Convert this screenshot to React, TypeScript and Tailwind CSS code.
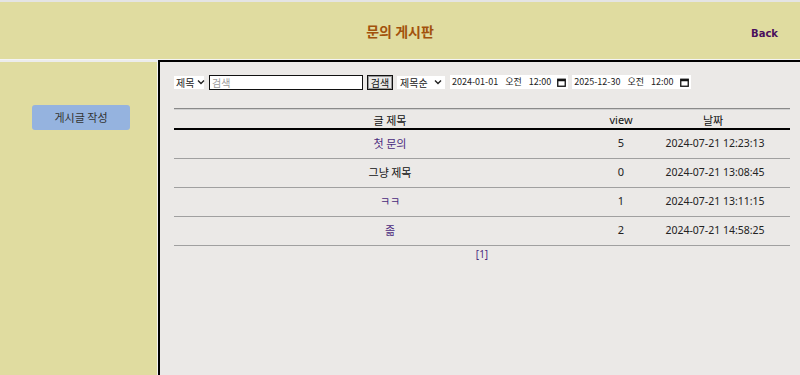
import React from "react";

const KR = { fontFamily: '"Noto Sans CJK KR", "Noto Sans", sans-serif' };
const SANS = { fontFamily: '"Noto Sans", "Noto Sans CJK KR", sans-serif' };

function Chevron() {
  return (
    <svg width="8" height="6" viewBox="0 0 8 6" className="ml-[3px] shrink-0">
      <path d="M1 1.5 L4 4.5 L7 1.5" stroke="#222" strokeWidth="1.4" fill="none" />
    </svg>
  );
}

function Cal() {
  return (
    <svg width="9" height="9" viewBox="0 0 9 9" className="ml-[6px] shrink-0">
      <rect x="0.75" y="1.25" width="7.5" height="7" fill="none" stroke="#111" strokeWidth="1.3" />
      <rect x="0.75" y="1.25" width="7.5" height="2" fill="#111" />
    </svg>
  );
}

function DateBox({ d, t }: { d: string; t: string }) {
  return (
    <div className="flex items-center bg-white h-[14px] px-[2px] text-[9px] text-[#222] whitespace-nowrap" style={KR}>
      <span>{d}</span>
      <span className="ml-[7px]">오전</span>
      <span className="ml-[7px]">{t}</span>
      <Cal />
    </div>
  );
}

const rows = [
  { t: "첫 문의", link: true, v: "5", d: "2024-07-21 12:23:13" },
  { t: "그냥 제목", link: false, v: "0", d: "2024-07-21 13:08:45" },
  { t: "ㅋㅋ", link: true, v: "1", d: "2024-07-21 13:11:15" },
  { t: "졺", link: true, v: "2", d: "2024-07-21 14:58:25" },
];

export default function App() {
  return (
    <div className="w-[800px] h-[375px] overflow-hidden bg-[#e4e4e4] pt-[2px] flex flex-col" style={KR}>
      <header className="h-[57px] bg-[#e0dca0] grid grid-cols-[1fr_auto_1fr] items-center shrink-0">
        <div />
        <div className="text-[14px] font-bold text-[#a2520c] pt-[1px]">문의 게시판</div>
        <div className="justify-self-end pr-[22px] pt-[6px] text-[10px] font-bold text-[#4a0f5c]" style={{ fontFamily: '"DejaVu Sans", sans-serif' }}>
          Back
        </div>
      </header>
      <div className="h-[1px] bg-[#f4f4f4] shrink-0" />
      <div className="flex flex-1 min-h-0">
        <aside className="w-[158px] shrink-0 bg-[#e0dca0] border-t-[2px] border-t-[#ececec] border-r border-r-[#f4f4f4] pt-[43px] pl-[32px]">
          <div className="w-[98px] h-[25px] rounded-[3px] bg-[#95b3df] flex items-center justify-center text-[11px] text-[#333]">
            게시글 작성
          </div>
        </aside>
        <main className="flex-1 bg-[#ebe9e7] border-t-[2px] border-l-[2px] border-black pl-[14px] pr-[10px] pt-[13px]">
          <div className="flex items-center h-[14px] text-[10px] text-[#222] whitespace-nowrap">
            <div className="flex items-center bg-white h-[13px] px-[2px] w-[30px] shrink-0">
              <span>제목</span>
              <Chevron />
            </div>
            <div className="ml-[5px] w-[154px] h-[15px] border-[1.5px] border-[#111] bg-white flex items-center px-[2px] text-[10px] text-[#9a9a9a] shrink-0">
              검색
            </div>
            <div className="ml-[4px] w-[26px] h-[15px] border border-[#111] bg-[#e9e9e9] flex items-center justify-center text-[10px] text-[#111] shadow-[inset_0_0_0_1px_#999] shrink-0">
              검색
            </div>
            <div className="ml-[4px] flex items-center bg-white h-[13px] px-[3px] w-[48px] justify-between shrink-0">
              <span>제목순</span>
              <Chevron />
            </div>
            <div className="ml-[5px] shrink-0">
              <DateBox d="2024-01-01" t="12:00" />
            </div>
            <div className="ml-[4px] shrink-0">
              <DateBox d="2025-12-30" t="12:00" />
            </div>
          </div>

          <div className="mt-[19px] h-[2px] border-t border-t-[#8a8a8a] border-b border-b-[#cfcfcf]" />

          <div className="grid grid-cols-[432px_30px_154px] text-[11px]">
            <div className="h-[18px] flex items-center justify-center text-[#111] pt-[3px]">글 제목</div>
            <div className="h-[18px] flex items-center justify-center text-[#111] pt-[3px]" style={SANS}>view</div>
            <div className="h-[18px] flex items-center justify-center text-[#111] pt-[3px]">날짜</div>
            <div className="col-span-3 h-[2px] bg-black" />
            {rows.map((r, i) => (
              <React.Fragment key={i}>
                <div className={`h-[28px] flex items-center justify-center pb-[1px] ${r.link ? "text-[#4b2c7e]" : "text-[#111]"}`}>{r.t}</div>
                <div className="h-[28px] flex items-center justify-center pb-[1px] text-[#222]" style={SANS}>{r.v}</div>
                <div className="h-[28px] flex items-center justify-center pb-[1px] text-[#222] text-[10.5px] pl-[4px]" style={SANS}>{r.d}</div>
                <div className="col-span-3 h-[1px] bg-[#a0a0a0]" />
              </React.Fragment>
            ))}
          </div>
          <div className="mt-[1px] text-center text-[10px] text-[#4b2c7e] w-[616px]" style={SANS}>[1]</div>
        </main>
      </div>
    </div>
  );
}
